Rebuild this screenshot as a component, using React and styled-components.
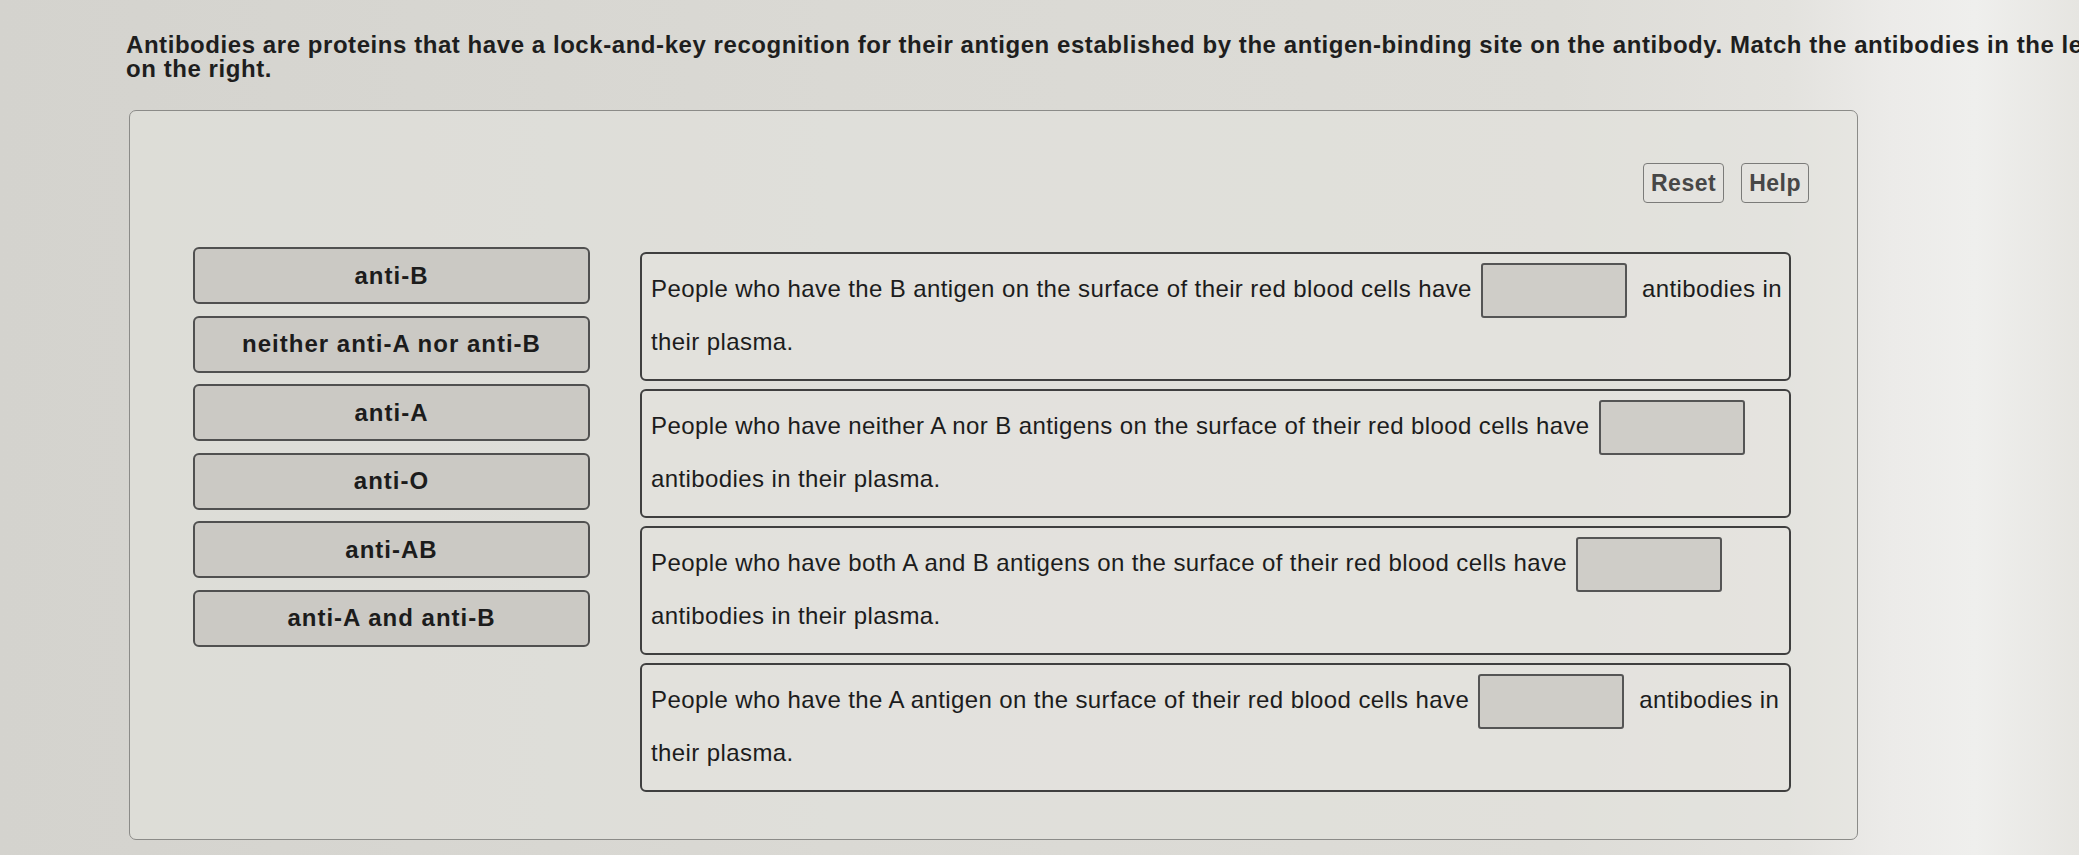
import React from "react";
import styled, { createGlobalStyle } from "styled-components";

const GlobalStyle = createGlobalStyle`
  html, body {
    margin: 0;
    padding: 0;
  }
  body {
    width: 2079px;
    height: 855px;
    overflow: hidden;
    background: linear-gradient(
      90deg,
      #d4d3ce 0%,
      #dad9d4 40%,
      #dddcd7 75%,
      #e3e2de 86%,
      #ecebe9 91%,
      #efefed 95%,
      #e6e5e1 100%
    );
    font-family: "Liberation Sans", Arial, sans-serif;
    color: #1f1f1f;
  }
`;

const Page = styled.main`
  box-sizing: border-box;
  height: 855px;
  padding: 33px 0 0 126px;
`;

const Prompt = styled.p`
  margin: 0;
  font-weight: 700;
  font-size: 24px;
  line-height: 24px;
  letter-spacing: 0.56px;
  white-space: nowrap;
  color: #1e1e1e;
`;

const Panel = styled.section`
  box-sizing: border-box;
  width: 1729px;
  height: 730px;
  margin: 29px 0 0 3px;
  padding: 52px 48px 0 63px;
  border: 1.5px solid #8b8b88;
  border-radius: 7px;
  background: rgba(228, 227, 222, 0.55);
`;

const Toolbar = styled.div`
  display: flex;
  justify-content: flex-end;
  gap: 17px;
`;

const ToolButton = styled.button`
  height: 40px;
  padding: 0 7px;
  border: 1.5px solid #7b7b79;
  border-radius: 4px;
  background: #e4e3df;
  font-family: "Liberation Sans", Arial, sans-serif;
  font-weight: 700;
  font-size: 23px;
  letter-spacing: 0.5px;
  color: #474747;
`;

const Workspace = styled.div`
  display: flex;
  align-items: flex-start;
  gap: 50px;
  margin-top: 44px;
`;

const ChoiceList = styled.div`
  display: flex;
  flex-direction: column;
  gap: 11.5px;
  width: 397px;
`;

const Choice = styled.div`
  box-sizing: border-box;
  height: 57px;
  display: flex;
  align-items: center;
  justify-content: center;
  border: 2px solid #505050;
  border-radius: 6px;
  background: #cbc9c4;
  font-weight: 700;
  font-size: 24px;
  letter-spacing: 1px;
  color: #1c1c1c;
`;

const StatementList = styled.div`
  display: flex;
  flex-direction: column;
  gap: 8px;
  width: 1151px;
  margin-top: 5px;
`;

const Statement = styled.div`
  box-sizing: border-box;
  min-height: 129px;
  padding: 8px 10px 0 9px;
  border: 2px solid #3f3f3f;
  border-radius: 6px;
  background: rgba(230, 229, 225, 0.45);
  font-size: 24px;
  line-height: 53px;
  letter-spacing: 0.4px;
  white-space: nowrap;
  color: #1c1c1c;
`;

const Blank = styled.span`
  display: inline-block;
  box-sizing: border-box;
  width: 146px;
  height: 55px;
  margin: -16px 8px -16px 2px;
  vertical-align: middle;
  border: 2px solid #555;
  border-radius: 3px;
  background: #cfcdc8;
`;

const choices = [
  "anti-B",
  "neither anti-A nor anti-B",
  "anti-A",
  "anti-O",
  "anti-AB",
  "anti-A and anti-B",
];

const statements = [
  {
    before: "People who have the B antigen on the surface of their red blood cells have",
    tail: "antibodies in",
    next: "their plasma.",
  },
  {
    before:
      "People who have neither A nor B antigens on the surface of their red blood cells have",
    tail: "",
    next: "antibodies in their plasma.",
  },
  {
    before:
      "People who have both A and B antigens on the surface of their red blood cells have",
    tail: "",
    next: "antibodies in their plasma.",
  },
  {
    before: "People who have the A antigen on the surface of their red blood cells have",
    tail: "antibodies in",
    next: "their plasma.",
  },
];

export default function App() {
  return (
    <>
      <GlobalStyle />
      <Page>
        <Prompt>
          Antibodies are proteins that have a lock-and-key recognition for their antigen
          established by the antigen-binding site on the antibody. Match the antibodies in
          the left column to the appropriate statement
          <br />
          on the right.
        </Prompt>
        <Panel>
          <Toolbar>
            <ToolButton type="button">Reset</ToolButton>
            <ToolButton type="button">Help</ToolButton>
          </Toolbar>
          <Workspace>
            <ChoiceList>
              {choices.map((c) => (
                <Choice key={c}>{c}</Choice>
              ))}
            </ChoiceList>
            <StatementList>
              {statements.map((s, i) => (
                <Statement key={i}>
                  {s.before} <Blank />
                  {s.tail ? ` ${s.tail}` : null}
                  <br />
                  {s.next}
                </Statement>
              ))}
            </StatementList>
          </Workspace>
        </Panel>
      </Page>
    </>
  );
}
